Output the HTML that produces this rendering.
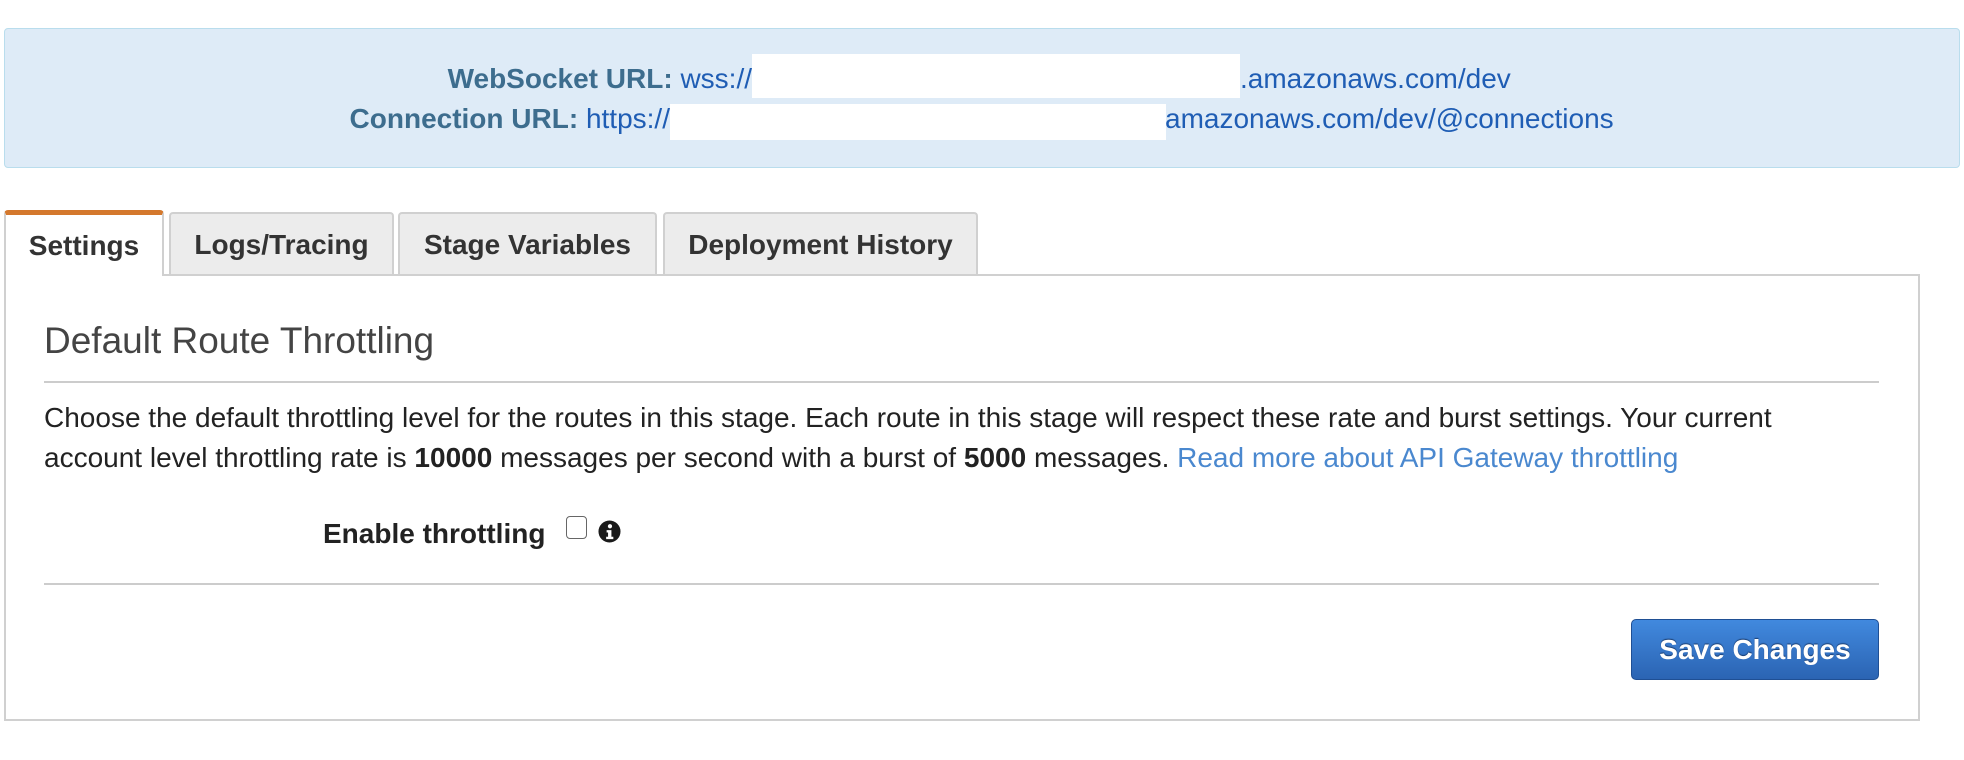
<!DOCTYPE html>
<html><head><meta charset="utf-8"><style>
body{margin:0;width:1964px;height:760px;background:#fff;font-family:"Liberation Sans",Arial,sans-serif;position:relative;overflow:hidden}
.a{position:absolute;white-space:nowrap}
.banner{left:4px;top:28px;width:1954px;height:138px;background:#deebf7;border:1px solid #b9dded;border-radius:4px}
.lbl{font-weight:bold;color:#3d6d8e;font-size:28px}
.url{color:#1f5db4;font-size:28px}
.wbox{background:#fff}
.tab{top:212px;height:62px;background:#ececec;border:2px solid #d0d0d0;border-bottom:none;border-radius:4px 4px 0 0;font-weight:bold;font-size:28px;color:#333;text-align:center;line-height:62px;box-sizing:border-box}
.panel{left:4px;top:274px;width:1916px;height:447px;border:2px solid #d0d0d0;border-top:none;box-sizing:border-box}
.hr{left:44px;width:1835px;height:2px;background:#cccccc}
p{margin:0}
</style></head><body>
<div class="a banner"></div>
<div class="a" style="right:1212px;top:62px;line-height:34px"><span class="lbl">WebSocket URL: </span><span class="url">wss://</span></div>
<div class="a wbox" style="left:752px;top:54px;width:488px;height:44px"></div>
<div class="a url" style="left:1240px;top:62px;line-height:34px">.amazonaws.com/dev</div>
<div class="a" style="right:1294px;top:102px;line-height:34px"><span class="lbl">Connection URL: </span><span class="url">https://</span></div>
<div class="a wbox" style="left:670px;top:104px;width:496px;height:36px"></div>
<div class="a url" style="left:1165px;top:102px;line-height:34px">amazonaws.com/dev/@connections</div>

<div class="a panel"></div>
<div class="a" style="left:4px;top:274px;width:1916px;height:2px;background:#d0d0d0"></div>
<div class="a tab" style="left:4px;width:160px;background:#fff;border:2px solid #d0d0d0;border-top:5px solid #d4782d;border-bottom:none;height:66px;top:210px;line-height:62px">Settings</div>
<div class="a tab" style="left:169px;width:225px">Logs/Tracing</div>
<div class="a tab" style="left:398px;width:259px">Stage Variables</div>
<div class="a tab" style="left:663px;width:315px">Deployment History</div>

<div class="a" style="left:44px;top:319px;font-size:37px;line-height:44px;color:#444">Default Route Throttling</div>
<div class="a hr" style="top:381px"></div>
<div class="a" style="left:44px;top:398px;font-size:28px;color:#222;line-height:40px">
<p>Choose the default throttling level for the routes in this stage. Each route in this stage will respect these rate and burst settings. Your current</p>
<p>account level throttling rate is <b>10000</b> messages per second with a burst of <b>5000</b> messages. <span style="color:#4a88cf">Read more about API Gateway throttling</span></p>
</div>
<div class="a" style="left:323px;top:517px;font-size:28px;line-height:34px;font-weight:bold;color:#222">Enable throttling</div>
<div class="a" style="left:566px;top:516px;width:19px;height:21px;border:1px solid #666;border-radius:4px;background:#fff"></div>
<svg class="a" style="left:598px;top:520px" width="23" height="23" viewBox="0 0 24 24"><circle cx="12" cy="12" r="11.5" fill="#1a1a1a"/><circle cx="12.5" cy="6.5" r="2.2" fill="#fff"/><path d="M9 10.5h5v7h2v2.5H8.5v-2.5h2v-4.5H9z" fill="#fff"/></svg>
<div class="a hr" style="top:583px"></div>
<div class="a" style="left:1631px;top:619px;width:248px;height:61px;box-sizing:border-box;border:1px solid #1f4f94;border-radius:5px;background:linear-gradient(#4189de,#2b64b3);color:#fff;font-weight:bold;font-size:28px;text-align:center;line-height:59px;text-shadow:0 -1px 1px #1a3d70">Save Changes</div>
</body></html>
